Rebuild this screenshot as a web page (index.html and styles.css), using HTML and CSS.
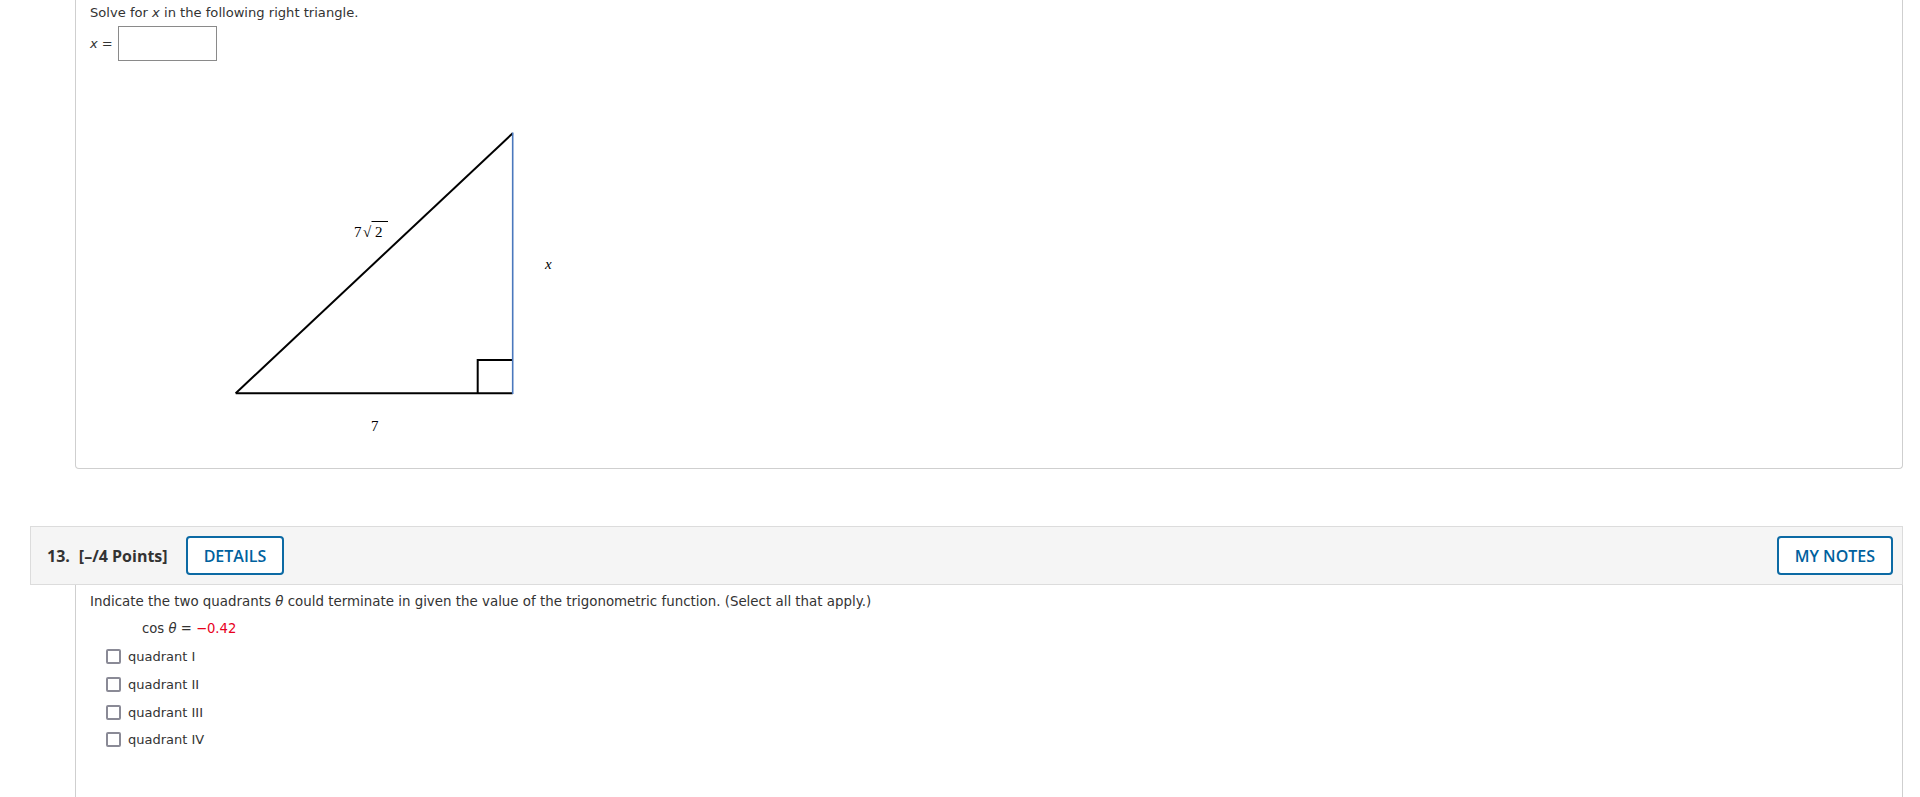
FILE: index.html
```html
<!DOCTYPE html>
<html>
<head>
<meta charset="utf-8">
<link rel="stylesheet" href="styles.css">
</head>
<body>
<div class="page">
  <div class="card card-prev">
    <p class="prompt">Solve for <i>x</i> in the following right triangle.</p>
    <div class="answer-row"><span class="var"><i>x</i> =</span><span class="input"></span></div>
    <svg class="figure" width="360" height="320" viewBox="0 0 360 320">
      <line x1="15.7" y1="273.3" x2="292.7" y2="13.3" stroke="#000" stroke-width="2"/>
      <line x1="15.7" y1="273.3" x2="292.7" y2="273.3" stroke="#000" stroke-width="2"/>
      <polyline points="257.7,273.3 257.7,240 292.7,240" fill="none" stroke="#000" stroke-width="2"/>
      <line x1="292.7" y1="12.5" x2="292.7" y2="274" stroke="#4a78bd" stroke-width="1.6"/>
      <text x="134" y="117" class="lbl">7</text>
      <text x="143" y="117" class="lbl">√</text>
      <line x1="151.5" y1="101.5" x2="168" y2="101.5" stroke="#000" stroke-width="1"/>
      <text x="155" y="117" class="lbl">2</text>
      <text x="325" y="149" class="lbl it">x</text>
      <text x="151" y="311" class="lbl">7</text>
    </svg>
  </div>

  <div class="q-header">
    <span class="q-num">13.</span>
    <span class="q-pts">[–/4 Points]</span>
    <button class="btn">DETAILS</button>
    <button class="btn btn-right">MY NOTES</button>
  </div>
  <div class="card card-q">
    <p class="q-text">Indicate the two quadrants <i>θ</i> could terminate in given the value of the trigonometric function. (Select all that apply.)</p>
    <p class="eq">cos <i>θ</i> = <span class="red">−0.42</span></p>
    <ul class="choices">
      <li><span class="box"></span>quadrant I</li>
      <li><span class="box"></span>quadrant II</li>
      <li><span class="box"></span>quadrant III</li>
      <li><span class="box"></span>quadrant IV</li>
    </ul>
  </div>
</div>
</body>
</html>
```

FILE: styles.css
```css
html, body {
  margin: 0;
  padding: 0;
  background: #fff;
}
body {
  font-family: "DejaVu Sans", Verdana, sans-serif;
  font-size: 13px;
  color: #333;
}
.page {
  padding: 0 17px 0 30px;
}
.card {
  margin-left: 45px;
  border: 1px solid #cfcfcf;
  background: #fff;
}
.card-prev {
  border-top: none;
  border-radius: 0 0 4px 4px;
  padding: 5px 14px 28px 14px;
}
.prompt {
  margin: 0;
  line-height: 16px;
  font-size: 13.1px;
}
.answer-row {
  display: flex;
  align-items: center;
  margin-top: 5px;
  gap: 5px;
}
.var {
  font-size: 13px;
}
.input {
  display: block;
  width: 97px;
  height: 33px;
  border: 1px solid #8a8a8a;
  background: #fff;
}
.figure {
  display: block;
  margin: 59px 0 0 130px;
}
.lbl {
  font-family: "Liberation Serif", "Times New Roman", serif;
  font-size: 15px;
  fill: #000;
}
.it {
  font-style: italic;
}
.q-header {
  margin-top: 57px;
  height: 57px;
  border: 1px solid #dcdcdc;
  background: #f5f5f5;
  display: flex;
  align-items: center;
  padding: 0 9px 0 16px;
  font-family: "Open Sans", sans-serif;
  font-weight: 700;
  font-size: 16px;
  color: #333;
}
.q-num {
  margin-right: 9px;
}
.q-pts {
  margin-right: 18px;
}
.btn {
  height: 39px;
  border: 2px solid #0c6aa4;
  border-radius: 4px;
  background: #fff;
  color: #00619e;
  font-family: "Open Sans", sans-serif;
  font-weight: 600;
  font-size: 16px;
  padding: 0 16px;
  cursor: pointer;
}
.btn-right {
  margin-left: auto;
}
.card-q {
  border-top: none;
  padding: 9px 14px 60px 14px;
}
.q-text {
  margin: 0;
  line-height: 16px;
  font-size: 13.4px;
}
.eq {
  margin: 11px 0 0 52px;
  line-height: 16px;
  font-size: 13.2px;
}
.red {
  color: #e8001c;
}
.choices {
  list-style: none;
  margin: 6px 0 0 16px;
  padding: 0;
}
.choices li {
  display: flex;
  align-items: center;
  height: 27.7px;
  font-size: 13px;
}
.box {
  width: 11px;
  height: 11px;
  border: 2px solid #8a8a96;
  border-radius: 2px;
  margin-right: 7px;
}
```
